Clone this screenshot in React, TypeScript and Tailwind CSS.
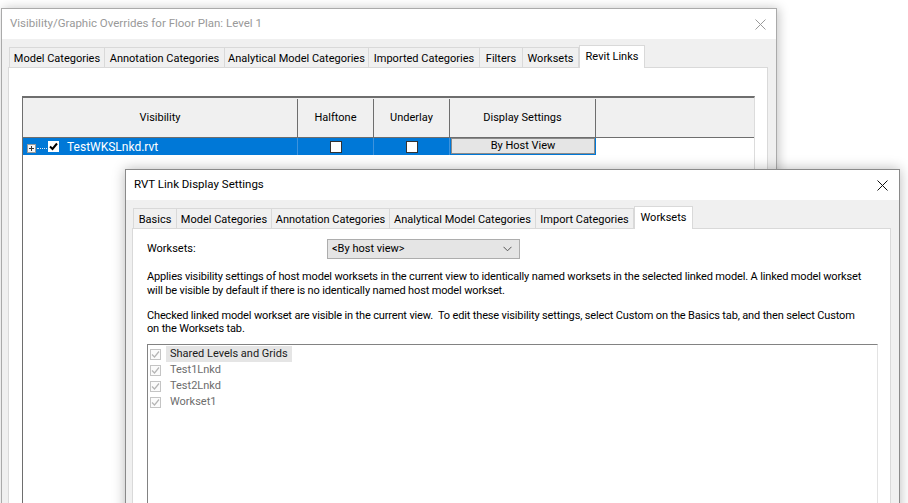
import React from 'react'

const FONT = "font-['Roboto','Liberation_Sans',sans-serif]"

// Close glyph drawn as two thin strokes
function CloseX({ color }: { color: string }) {
  return (
    <svg width="11" height="11" viewBox="0 0 11 11">
      <path d="M0.5 0.5 L10.5 10.5 M10.5 0.5 L0.5 10.5" stroke={color} strokeWidth="1" fill="none" />
    </svg>
  )
}

function Tab({ label, w, active = false }: { label: string; w: number; active?: boolean }) {
  return (
    <div
      style={{ width: w }}
      className={
        active
          ? 'relative z-10 -mb-px h-[23px] shrink-0 whitespace-nowrap border border-b-0 border-[#d9d9d9] bg-white pt-[3px] text-center leading-[15px]'
          : 'h-[20px] shrink-0 whitespace-nowrap border border-b-0 border-l-0 border-[#d9d9d9] bg-[#f0f0f0] pt-[3px] text-center leading-[15px] first:border-l'
      }
    >
      {label}
    </div>
  )
}

function CheckMark({ color, width = 1.6 }: { color: string; width?: number }) {
  return (
    <svg width="9" height="9" viewBox="0 0 9 9">
      <path d="M1 4.5 L3.5 7 L8 1.5" stroke={color} strokeWidth={width} fill="none" />
    </svg>
  )
}

function VisibilityDialog() {
  const tabs = [
    { label: 'Model Categories', w: 96 },
    { label: 'Annotation Categories', w: 120 },
    { label: 'Analytical Model Categories', w: 144 },
    { label: 'Imported Categories', w: 111 },
    { label: 'Filters', w: 43 },
    { label: 'Worksets', w: 56 },
  ]

  return (
    <div className="absolute left-[1px] top-[8px] flex h-[520px] w-[776px] flex-col border border-[#aaaaaa] bg-[#f0f0f0] shadow-[2px_0_10px_rgba(0,0,0,0.22)]">
      {/* Title bar (inactive) */}
      <div className="flex h-[30px] shrink-0 items-center justify-between bg-white pl-[8px] pr-[10px] text-[11.5px] text-[#999999]">
        <span>Visibility/Graphic Overrides for Floor Plan: Level 1</span>
        <CloseX color="#9a9a9a" />
      </div>

      <div className="flex flex-1 flex-col pl-[6px] pt-[6px]">
        <div className="flex h-[22px] shrink-0 items-end pl-px text-[11px] text-[#000]">
          {tabs.map((t) => (
            <Tab key={t.label} label={t.label} w={t.w} />
          ))}
          <Tab label="Revit Links" w={66} active />
        </div>

        <div className="h-[460px] w-[760px] shrink-0 border border-[#d9d9d9] bg-white pl-[13px] pt-[28px]">
          {/* Grid */}
          <div className="h-[420px] w-[733px] border-l border-r border-t-2 border-l-[#6e6e6e] border-r-[#dcdcdc] border-t-[#6e6e6e] text-[11px]">
            <div className="flex h-[40px] border-b border-[#6e6e6e] bg-[#f0f0f0] pt-px text-[#000]">
              <div className="flex w-[275px] items-center justify-center border-r border-[#6e6e6e]">Visibility</div>
              <div className="flex w-[76px] items-center justify-center border-r border-[#6e6e6e]">Halftone</div>
              <div className="flex w-[76px] items-center justify-center border-r border-[#6e6e6e]">Underlay</div>
              <div className="flex w-[146px] items-center justify-center border-r border-[#6e6e6e]">Display Settings</div>
              <div className="flex-1" />
            </div>

            {/* Selected row */}
            <div className="flex h-[17px]">
              <div className="flex w-[275px] items-center border-r border-[#3d93dd] bg-[#0078d7] pl-[4px] text-white">
                <div className="mt-[4px] flex h-[9px] w-[9px] items-center justify-center border border-[#9a9a9a] bg-[#f4f4f4]">
                  <svg width="7" height="7" viewBox="0 0 7 7">
                    <path d="M1 3.5 H6 M3.5 1 V6" stroke="#333" strokeWidth="1" />
                  </svg>
                </div>
                <div className="ml-px mt-[4px] h-0 w-[10px] border-t border-dotted border-[#dde8f5]" />
                <div className="ml-[1px] flex h-[11px] w-[11px] items-center justify-center bg-white">
                  <CheckMark color="#000" width={2} />
                </div>
                <span className="ml-[8px] text-[12px]">TestWKSLnkd.rvt</span>
              </div>
              <div className="flex w-[76px] items-center justify-center border-r border-[#3d93dd] bg-[#0078d7]">
                <div className="h-[12px] w-[12px] border border-[#333] bg-white" />
              </div>
              <div className="flex w-[76px] items-center justify-center border-r border-[#3d93dd] bg-[#0078d7]">
                <div className="h-[12px] w-[12px] border border-[#333] bg-white" />
              </div>
              <div className="flex w-[146px] items-start bg-[#0078d7] px-[1px]">
                <div className="flex h-[16px] w-full items-center justify-center border border-[#8a8a8a] bg-[#e5e5e5] text-[#000]">
                  By Host View
                </div>
              </div>
              <div className="flex-1 bg-white" />
            </div>
          </div>
        </div>
      </div>
    </div>
  )
}

function LinkDisplayDialog() {
  const tabs = [
    { label: 'Basics', w: 44 },
    { label: 'Model Categories', w: 95 },
    { label: 'Annotation Categories', w: 118 },
    { label: 'Analytical Model Categories', w: 146 },
    { label: 'Import Categories', w: 98 },
  ]
  const worksets = [
    { name: 'Shared Levels and Grids', focused: true },
    { name: 'Test1Lnkd', focused: false },
    { name: 'Test2Lnkd', focused: false },
    { name: 'Workset1', focused: false },
  ]

  return (
    <div className="absolute left-[125px] top-[169px] flex h-[380px] w-[775px] flex-col border border-[#8a8a8a] bg-[#f0f0f0] shadow-[0_0_12px_rgba(0,0,0,0.28)]">
      {/* Title bar */}
      <div className="flex h-[30px] shrink-0 items-center justify-between bg-white pl-[8px] pr-[11px] text-[11.5px] text-[#000]">
        <span>RVT Link Display Settings</span>
        <CloseX color="#111" />
      </div>

      <div className="flex flex-1 flex-col pl-[6px] pt-[7px]">
        <div className="flex h-[21px] shrink-0 items-end pl-px text-[11px] text-[#000]">
          {tabs.map((t) => (
            <Tab key={t.label} label={t.label} w={t.w} />
          ))}
          <Tab label="Worksets" w={59} active />
        </div>

        <div className="h-[320px] w-[759px] shrink-0 border border-[#d9d9d9] bg-white pl-[14px] pt-[10px] text-[11px] text-[#000]">
          {/* Worksets selector */}
          <div className="flex h-[20px] items-center">
            <span className="w-[180px]">Worksets:</span>
            <div className="flex h-[20px] w-[193px] items-center justify-between border border-[#adadad] bg-[#e5e5e5] pl-[4px] pr-[7px]">
              <span>&lt;By host view&gt;</span>
              <svg width="9" height="6" viewBox="0 0 9 6">
                <path d="M0.5 0.8 L4.5 4.8 L8.5 0.8" stroke="#555" strokeWidth="1" fill="none" />
              </svg>
            </div>
          </div>

          <div className="mt-[11px] whitespace-nowrap leading-[14px] tracking-[-0.15px]">
            <div>
              Applies visibility settings of host model worksets in the current view to identically named worksets in the selected linked model. A linked model workset
            </div>
            <div>will be visible by default if there is no identically named host model workset.</div>
          </div>

          <div className="mt-[11px] whitespace-nowrap leading-[13px] tracking-[-0.15px]">
            <div>
              Checked linked model workset are visible in the current view.&nbsp; To edit these visibility settings, select Custom on the Basics tab, and then select Custom
            </div>
            <div>on the Worksets tab.</div>
          </div>

          {/* Worksets list */}
          <div className="mt-[9px] h-[200px] w-[731px] border border-b-[#e3e3e3] border-l-[#828282] border-r-[#e3e3e3] border-t-[#828282] bg-white pt-[1px]">
            {worksets.map((w) => (
              <div key={w.name} className="flex h-[16px] items-center">
                <div className="ml-[2px] flex h-[11px] w-[11px] items-center justify-center border border-[#c4c4c4] bg-[#fbfbfb]">
                  <CheckMark color="#b5b5b5" width={1.2} />
                </div>
                <span
                  className={
                    w.focused
                      ? 'ml-[5px] flex h-[16px] items-center bg-[#e5e5e5] px-[4px] text-[#1a1a1a]'
                      : 'ml-[5px] px-[4px] text-[#6d6d6d]'
                  }
                >
                  {w.name}
                </span>
              </div>
            ))}
          </div>
        </div>
      </div>
    </div>
  )
}

export default function App() {
  return (
    <div className={`relative h-[503px] w-[908px] overflow-hidden bg-white ${FONT}`}>
      <VisibilityDialog />
      <LinkDisplayDialog />
    </div>
  )
}
